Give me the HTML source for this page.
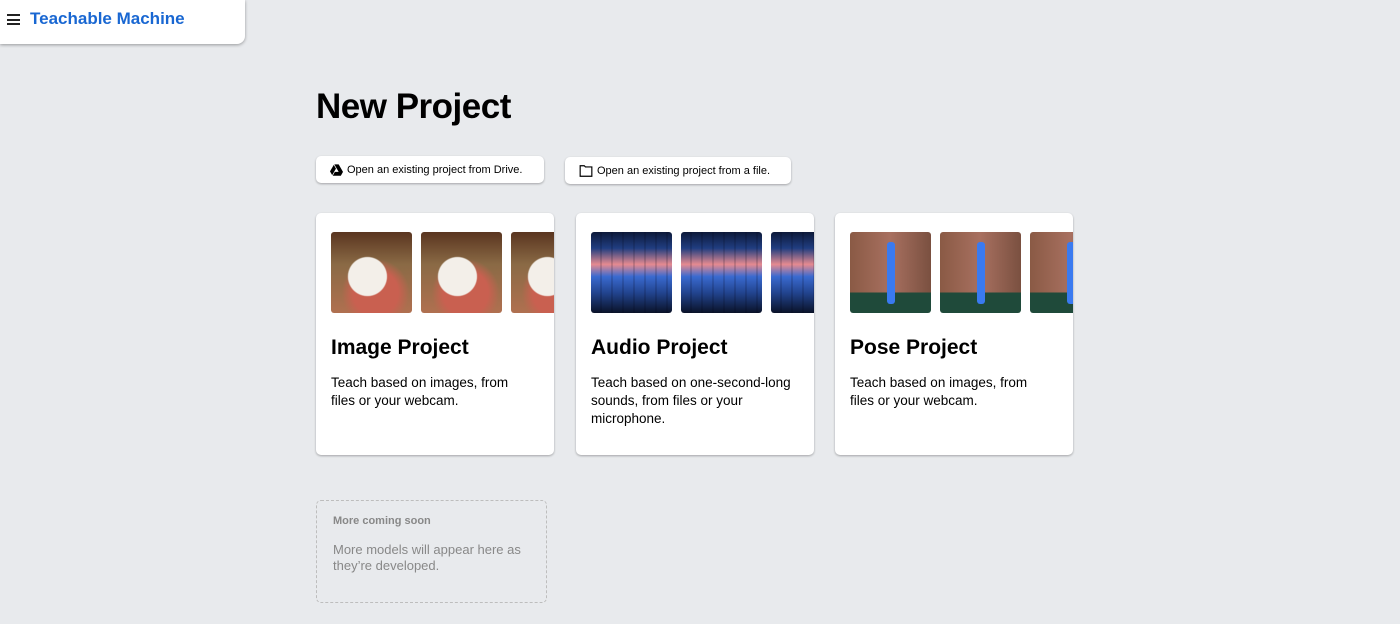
<!DOCTYPE html>
<html><head><style>
*{box-sizing:border-box;margin:0;padding:0}
body{width:1400px;height:624px;background:#e8eaed;font-family:"Liberation Sans",sans-serif;position:relative;overflow:hidden;color:#000}
.hdr{position:absolute;left:0;top:0;width:245px;height:44px;background:#fff;border-radius:0 0 8px 0;box-shadow:0 1px 3px rgba(0,0,0,.35)}
.hdr .t{position:absolute;left:30px;top:9px;font-size:17px;font-weight:bold;color:#1967d2}
.burger{position:absolute;left:7px;top:14px;width:13px}
.burger i{display:block;height:2px;background:#222;margin-bottom:2.5px}
h1{position:absolute;left:316px;top:87px;font-size:35px;font-weight:bold;letter-spacing:-.5px}
.btn{position:absolute;top:156px;height:27px;background:#fff;border-radius:5px;box-shadow:0 1px 2px rgba(0,0,0,.3);font-size:11px;line-height:29px;padding-left:31px}
.btn svg{position:absolute;left:14px;top:8px}
.card{position:absolute;top:213px;width:238px;height:242px;background:#fff;border-radius:5px;box-shadow:0 1px 2px rgba(0,0,0,.3);overflow:hidden}
.card h2{position:absolute;left:15px;top:123px;font-size:21px;font-weight:bold}
.card p{position:absolute;left:15px;top:161px;font-size:13.5px;line-height:18px;width:196px}
.thumbs{position:absolute;left:15px;top:19px;width:223px;height:81px;overflow:hidden}
.th{position:absolute;top:0;width:81px;height:81px;border-radius:3px}
.img{background:radial-gradient(circle at 45% 55%,#f3efe9 0 30%,transparent 32%),radial-gradient(circle at 55% 75%,#c96050 0 30%,transparent 45%),linear-gradient(#5a3520,#8a6a45 40%,#b07050)}
.aud{background:repeating-linear-gradient(90deg,transparent 0 9px,rgba(0,0,20,.15) 9px 11px),linear-gradient(#0d1a3a,#203d80 20%,#e58a90 40%,#3a6ad0 55%,#22448f 75%,#0a1228)}
.pose{background:linear-gradient(transparent 75%,#1f4a3a 75%),linear-gradient(90deg,#8a5a45,#a87060 50%,#7a5040)}
.pose:after{content:"";position:absolute;left:37px;top:10px;width:8px;height:62px;background:#3a7af0;border-radius:3px}
.soon{position:absolute;left:316px;top:500px;width:231px;height:103px;border:1.5px dashed #bdbdbd;border-radius:5px;color:#888}
.soon b{position:absolute;left:16px;top:14px;font-size:11px}
.soon p{position:absolute;left:16px;top:41px;font-size:13px;line-height:16px;width:210px}
</style></head><body>
<div class="hdr"><div class="burger"><i></i><i></i><i></i></div><div class="t">Teachable Machine</div></div>
<h1>New Project</h1>
<div class="btn" style="left:316px;width:228px"><svg width="13" height="12" viewBox="0 0 24 21"><path d="M8 0h8l8 14h-8zM7 1l4 7-7 12-4-7zM9 14h15l-4 7H5z" fill="#000"/></svg>Open an existing project from Drive.</div>
<div class="btn" style="left:565px;width:226px;top:157px;padding-left:32px"><svg width="14" height="12" viewBox="0 0 24 20"><path d="M2 1h7l2 2h11v16H2z" fill="none" stroke="#000" stroke-width="2"/></svg>Open an existing project from a file.</div>
<div class="card" style="left:316px"><div class="thumbs"><div class="th img" style="left:0"></div><div class="th img" style="left:90px"></div><div class="th img" style="left:180px"></div></div><h2>Image Project</h2><p>Teach based on images, from files or your webcam.</p></div>
<div class="card" style="left:576px"><div class="thumbs"><div class="th aud" style="left:0"></div><div class="th aud" style="left:90px"></div><div class="th aud" style="left:180px"></div></div><h2>Audio Project</h2><p style="width:212px">Teach based on one-second-long sounds, from files or your microphone.</p></div>
<div class="card" style="left:835px"><div class="thumbs"><div class="th pose" style="left:0"></div><div class="th pose" style="left:90px"></div><div class="th pose" style="left:180px"></div></div><h2>Pose Project</h2><p>Teach based on images, from files or your webcam.</p></div>
<div class="soon"><b>More coming soon</b><p>More models will appear here as they’re developed.</p></div>
</body></html>
